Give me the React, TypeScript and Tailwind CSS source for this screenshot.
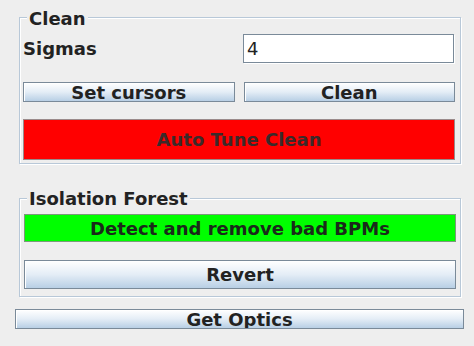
import React from "react";

const font = { fontFamily: '"DejaVu Sans", "Liberation Sans", sans-serif' };

function MetalButton({ label, className }: { label: string; className: string }) {
  return (
    <div
      className={`flex items-center justify-center border border-[#7a8a99] bg-gradient-to-b from-[#ffffff] via-[#e4edf6] to-[#b8cfe5] shadow-[inset_1px_1px_0_#ffffff] text-[18px] font-bold leading-none text-[#222222] overflow-hidden ${className}`}
    >
      <span className="pt-[1px]">{label}</span>
    </div>
  );
}

export default function App() {
  return (
    <div className="w-[474px] h-[346px] bg-[#eeeeee] flex flex-col overflow-hidden" style={font}>
      {/* Clean panel */}
      <div className="relative mt-[17px] ml-[19px] w-[442px] h-[147px] border border-[#b8c8d8] shadow-[inset_1px_1px_0_#ffffff,1px_1px_0_#ffffff] pl-[3px] pr-[5px] pt-[16px] flex flex-col">
        <span className="absolute -top-[8px] left-[7px] px-[2px] bg-[#eeeeee] text-[18px] font-bold leading-[18px] text-[#222222]">
          Clean
        </span>
        <div className="flex items-center h-[29px]">
          <span className="w-[220px] text-[18px] font-bold leading-none text-[#222222] pt-[1px]">Sigmas</span>
          <div className="w-[211px] h-[29px] bg-white border border-[#7a8a99] shadow-[1px_1px_0_#ffffff] flex items-center pl-[3px] text-[18px] leading-none text-[#222222]">
            4
          </div>
        </div>
        <div className="mt-[19px] grid grid-cols-2 gap-[9px]">
          <MetalButton label="Set cursors" className="h-[20px]" />
          <MetalButton label="Clean" className="h-[20px]" />
        </div>
        <div className="mt-[17px] h-[41px] bg-[#ff0000] border border-[#9a8a8a] flex items-center justify-center text-[18px] font-bold leading-none text-[#3a2a2a]">
          <span className="pt-[1px]">Auto Tune Clean</span>
        </div>
      </div>

      {/* Isolation Forest panel */}
      <div className="relative mt-[34px] ml-[19px] w-[442px] h-[99px] border border-[#b8c8d8] shadow-[inset_1px_1px_0_#ffffff,1px_1px_0_#ffffff] px-[4px] pt-[15px] flex flex-col">
        <span className="absolute -top-[9px] left-[7px] px-[2px] bg-[#eeeeee] text-[18px] font-bold leading-[18px] text-[#222222]">
          Isolation Forest
        </span>
        <div className="h-[28px] bg-[#00ff00] border border-[#7a9a7a] flex items-center justify-center text-[18px] font-bold leading-none text-[#1a2a1a]">
          <span className="pt-[1px]">Detect and remove bad BPMs</span>
        </div>
        <MetalButton label="Revert" className="mt-[18px] h-[29px]" />
      </div>

      <MetalButton label="Get Optics" className="mt-[12px] ml-[15px] w-[449px] h-[20px]" />
    </div>
  );
}
